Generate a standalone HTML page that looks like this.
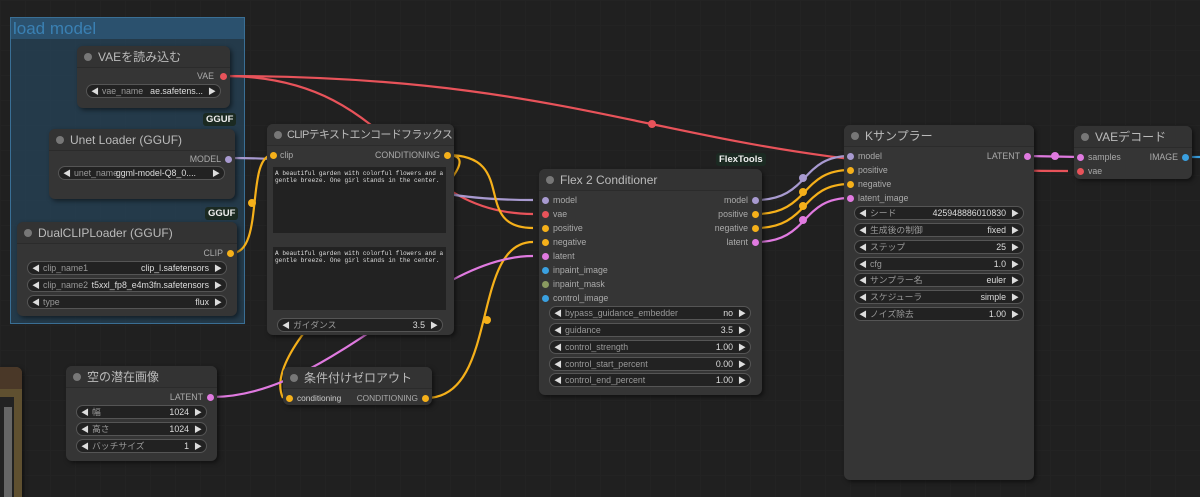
<!DOCTYPE html>
<html><head><meta charset="utf-8"><style>
*{box-sizing:border-box;margin:0;padding:0}
body{width:1200px;height:491px;overflow:hidden;background:#202020;font-family:"Liberation Sans","Noto Sans CJK JP",sans-serif;position:relative;
background-image:linear-gradient(#232323 1px,transparent 1px),linear-gradient(90deg,#232323 1px,transparent 1px);background-size:25px 25px}
.a{position:absolute}
.grp{position:absolute;left:10px;top:17px;width:235px;height:307px;background:rgba(40,80,110,0.55);border:1px solid #3a6f95}
.grp .h{height:21px;background:rgba(50,100,140,0.55);color:#3a80b3;font-size:17px;padding-left:2px;line-height:21px}
.n{position:absolute;background:#353535;border-radius:6px;box-shadow:2px 2px 5px rgba(0,0,0,.5)}
.t{height:22px;border-bottom:1px solid #2b2b2b;color:#bbb;font-size:12px;line-height:22px;padding-left:21px;position:relative;background:#333;border-radius:6px 6px 0 0;white-space:nowrap;overflow:hidden}
.t:before{content:"";position:absolute;left:7px;top:7px;width:8px;height:8px;border-radius:50%;background:#777}
.s{position:absolute;font-size:8.8px;color:#aaa;line-height:12px;white-space:nowrap}
.d{position:absolute;width:7px;height:7px;border-radius:50%}
.w{position:absolute;height:14px;border:1px solid #555;border-radius:7px;background:#222;font-size:8.8px;line-height:13px;color:#999;white-space:nowrap;overflow:hidden}
.w .l{position:absolute;left:15px}
.w .v{position:absolute;right:17px;color:#ddd}
.w:before{content:"◀";position:absolute;left:4px;font-size:8px;color:#ddd}
.w:after{content:"▶";position:absolute;right:4px;font-size:8px;color:#ddd}
.b{position:absolute;background:#1b2a22;color:#eee;font-size:9.5px;font-weight:bold;padding:1px 3px;border-radius:3px;line-height:11px}
.ta{position:absolute;background:#222;color:#ddd;font-family:"Liberation Mono",monospace;font-size:6.1px;line-height:7px;padding:3px 2px}
</style></head><body>
<div class="grp"><div class="h">load model</div></div>

<svg class="a" style="left:0;top:0" width="1200" height="491">
<g fill="none" stroke-width="2.2">
<path d="M224,76 C620,76 680,171 1068,171" stroke="#e8535a"/>
<path d="M224,76 C400,76 400,214 533,214" stroke="#e8535a"/>
<path d="M230,158 C400,158 380,200 533,200" stroke="#a89ad0"/>
<path d="M232,253 C265,253 245,155 273,155" stroke="#f5b01a"/>
<path d="M447,155 C520,155 470,228 533,228" stroke="#f5b01a"/>
<path d="M447,155 C520,155 250,330 283,398" stroke="#f5b01a"/>
<path d="M426,398 C500,398 470,242 533,242" stroke="#f5b01a"/>
<path d="M212,397 C330,397 430,256 533,256" stroke="#e07ae0"/>
<path d="M756,200 C810,200 800,156 850,156" stroke="#a89ad0"/>
<path d="M756,214 C810,214 800,170 850,170" stroke="#f5b01a"/>
<path d="M756,228 C810,228 800,184 850,184" stroke="#f5b01a"/>
<path d="M756,242 C810,242 800,198 850,198" stroke="#e07ae0"/>
<path d="M1028,156 L1080,157" stroke="#e07ae0"/>
<path d="M1186,157 L1200,157" stroke="#3aa0e0"/>
</g>
<circle cx="652" cy="124" r="4" fill="#e8535a"/>
<circle cx="252" cy="203" r="4" fill="#f5b01a"/>
<circle cx="487" cy="320" r="4" fill="#f5b01a"/>
<circle cx="803" cy="178" r="4" fill="#a89ad0"/>
<circle cx="803" cy="192" r="4" fill="#f5b01a"/>
<circle cx="803" cy="206" r="4" fill="#f5b01a"/>
<circle cx="803" cy="220" r="4" fill="#e07ae0"/>
<circle cx="1055" cy="156" r="4" fill="#e07ae0"/>
</svg>

<div class="n" style="left:-10px;top:367px;width:32px;height:130px;background:#5f5030;border-radius:0 6px 0 0">
<div style="height:22px;background:#4a3828;border-radius:0 6px 0 0"></div>
<div class="a" style="left:10px;top:30px;width:14px;height:100px;background:#222"></div>
<div class="a" style="left:14px;top:40px;width:8px;height:90px;background:#666"></div>
</div>

<div class="n" style="left:77px;top:46px;width:153px;height:62px"><div class="t">VAEを読み込む</div>
<div class="s" style="right:16px;top:24px">VAE</div><div class="d" style="right:3px;top:27px;background:#e8535a"></div>
<div class="w" style="left:9px;top:38px;width:135px"><span class="l">vae_name</span><span class="v">ae.safetens...</span></div></div>
<div class="b" style="left:203px;top:113px">GGUF</div>

<div class="n" style="left:49px;top:129px;width:186px;height:70px"><div class="t">Unet Loader (GGUF)</div>
<div class="s" style="right:14px;top:24px">MODEL</div><div class="d" style="right:3px;top:27px;background:#a89ad0"></div>
<div class="w" style="left:9px;top:37px;width:167px"><span class="l">unet_name</span><span class="v" style="right:28px">ggml-model-Q8_0....</span></div></div>
<div class="b" style="left:205px;top:207px">GGUF</div>

<div class="n" style="left:17px;top:222px;width:220px;height:94px"><div class="t">DualCLIPLoader (GGUF)</div>
<div class="s" style="right:14px;top:25px">CLIP</div><div class="d" style="right:3px;top:28px;background:#f5b01a"></div>
<div class="w" style="left:10px;top:39px;width:200px"><span class="l">clip_name1</span><span class="v">clip_l.safetensors</span></div>
<div class="w" style="left:10px;top:56px;width:200px"><span class="l">clip_name2</span><span class="v">t5xxl_fp8_e4m3fn.safetensors</span></div>
<div class="w" style="left:10px;top:73px;width:200px"><span class="l">type</span><span class="v">flux</span></div></div>

<div class="n" style="left:267px;top:124px;width:187px;height:211px"><div class="t" style="font-size:11px;padding-left:20px;letter-spacing:-0.7px">CLIPテキストエンコードフラックス</div>
<div class="d" style="left:3px;top:28px;background:#f5b01a"></div><div class="s" style="left:13px;top:25px">clip</div>
<div class="s" style="right:14px;top:25px">CONDITIONING</div><div class="d" style="right:3px;top:28px;background:#f5b01a"></div>
<div class="ta" style="left:6px;top:43px;width:173px;height:66px">A beautiful garden with colorful flowers and a gentle breeze. One girl stands in the center.</div>
<div class="ta" style="left:6px;top:123px;width:173px;height:63px">A beautiful garden with colorful flowers and a gentle breeze. One girl stands in the center.</div>
<div class="w" style="left:10px;top:194px;width:166px"><span class="l">ガイダンス</span><span class="v">3.5</span></div></div>

<div class="b" style="left:716px;top:153px">FlexTools</div>
<div class="n" style="left:539px;top:169px;width:223px;height:226px"><div class="t">Flex 2 Conditioner</div>
<div class="d" style="left:3px;top:28px;background:#a89ad0"></div><div class="s" style="left:14px;top:25px">model</div>
<div class="d" style="left:3px;top:42px;background:#e8535a"></div><div class="s" style="left:14px;top:39px">vae</div>
<div class="d" style="left:3px;top:56px;background:#f5b01a"></div><div class="s" style="left:14px;top:53px">positive</div>
<div class="d" style="left:3px;top:70px;background:#f5b01a"></div><div class="s" style="left:14px;top:67px">negative</div>
<div class="d" style="left:3px;top:84px;background:#e07ae0"></div><div class="s" style="left:14px;top:81px">latent</div>
<div class="d" style="left:3px;top:98px;background:#3aa0e0"></div><div class="s" style="left:14px;top:95px">inpaint_image</div>
<div class="d" style="left:3px;top:112px;background:#8a9a60"></div><div class="s" style="left:14px;top:109px">inpaint_mask</div>
<div class="d" style="left:3px;top:126px;background:#3aa0e0"></div><div class="s" style="left:14px;top:123px">control_image</div>
<div class="s" style="right:14px;top:25px">model</div><div class="d" style="right:3px;top:28px;background:#a89ad0"></div>
<div class="s" style="right:14px;top:39px">positive</div><div class="d" style="right:3px;top:42px;background:#f5b01a"></div>
<div class="s" style="right:14px;top:53px">negative</div><div class="d" style="right:3px;top:56px;background:#f5b01a"></div>
<div class="s" style="right:14px;top:67px">latent</div><div class="d" style="right:3px;top:70px;background:#e07ae0"></div>
<div class="w" style="left:10px;top:137px;width:202px"><span class="l">bypass_guidance_embedder</span><span class="v">no</span></div>
<div class="w" style="left:10px;top:154px;width:202px"><span class="l">guidance</span><span class="v">3.5</span></div>
<div class="w" style="left:10px;top:171px;width:202px"><span class="l">control_strength</span><span class="v">1.00</span></div>
<div class="w" style="left:10px;top:188px;width:202px"><span class="l">control_start_percent</span><span class="v">0.00</span></div>
<div class="w" style="left:10px;top:204px;width:202px"><span class="l">control_end_percent</span><span class="v">1.00</span></div></div>

<div class="n" style="left:844px;top:125px;width:190px;height:355px"><div class="t">Kサンプラー</div>
<div class="d" style="left:3px;top:28px;background:#a89ad0"></div><div class="s" style="left:14px;top:25px">model</div>
<div class="d" style="left:3px;top:42px;background:#f5b01a"></div><div class="s" style="left:14px;top:39px">positive</div>
<div class="d" style="left:3px;top:56px;background:#f5b01a"></div><div class="s" style="left:14px;top:53px">negative</div>
<div class="d" style="left:3px;top:70px;background:#e07ae0"></div><div class="s" style="left:14px;top:67px">latent_image</div>
<div class="s" style="right:14px;top:25px">LATENT</div><div class="d" style="right:3px;top:28px;background:#e07ae0"></div>
<div class="w" style="left:10px;top:81px;width:170px"><span class="l">シード</span><span class="v">425948886010830</span></div>
<div class="w" style="left:10px;top:98px;width:170px"><span class="l">生成後の制御</span><span class="v">fixed</span></div>
<div class="w" style="left:10px;top:115px;width:170px"><span class="l">ステップ</span><span class="v">25</span></div>
<div class="w" style="left:10px;top:132px;width:170px"><span class="l">cfg</span><span class="v">1.0</span></div>
<div class="w" style="left:10px;top:148px;width:170px"><span class="l">サンプラー名</span><span class="v">euler</span></div>
<div class="w" style="left:10px;top:165px;width:170px"><span class="l">スケジューラ</span><span class="v">simple</span></div>
<div class="w" style="left:10px;top:182px;width:170px"><span class="l">ノイズ除去</span><span class="v">1.00</span></div></div>

<div class="n" style="left:1074px;top:126px;width:118px;height:53px"><div class="t">VAEデコード</div>
<div class="d" style="left:3px;top:28px;background:#e07ae0"></div><div class="s" style="left:14px;top:25px">samples</div>
<div class="d" style="left:3px;top:42px;background:#e8535a"></div><div class="s" style="left:14px;top:39px">vae</div>
<div class="s" style="right:14px;top:25px">IMAGE</div><div class="d" style="right:3px;top:28px;background:#3aa0e0"></div></div>

<div class="n" style="left:66px;top:366px;width:151px;height:95px"><div class="t">空の潜在画像</div>
<div class="s" style="right:14px;top:25px">LATENT</div><div class="d" style="right:3px;top:28px;background:#e07ae0"></div>
<div class="w" style="left:10px;top:39px;width:131px"><span class="l">幅</span><span class="v">1024</span></div>
<div class="w" style="left:10px;top:56px;width:131px"><span class="l">高さ</span><span class="v">1024</span></div>
<div class="w" style="left:10px;top:73px;width:131px"><span class="l">バッチサイズ</span><span class="v">1</span></div></div>

<div class="n" style="left:283px;top:367px;width:149px;height:38px"><div class="t">条件付けゼロアウト</div>
<div class="d" style="left:3px;top:28px;background:#f5b01a"></div><div class="s" style="left:14px;top:25px;color:#ccc;font-size:8.3px">conditioning</div>
<div class="s" style="right:14px;top:25px;font-size:8.3px">CONDITIONING</div><div class="d" style="right:3px;top:28px;background:#f5b01a"></div></div>
</body></html>
